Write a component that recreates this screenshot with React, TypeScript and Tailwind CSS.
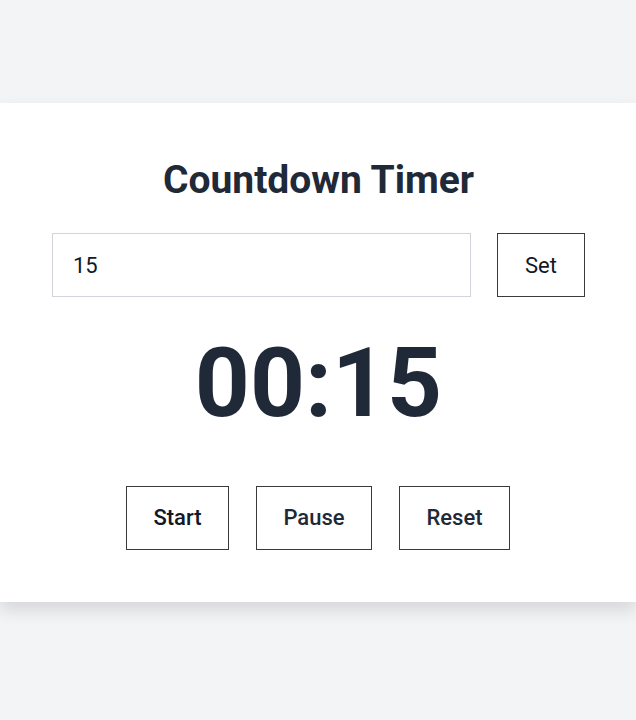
import { useEffect, useState } from "react";

function pad(n: number) {
  return n.toString().padStart(2, "0");
}

export default function App() {
  const [input, setInput] = useState("15");
  const [total, setTotal] = useState(15);
  const [left, setLeft] = useState(15);
  const [running, setRunning] = useState(false);

  useEffect(() => {
    if (!running) return;
    const id = setInterval(() => {
      setLeft((s) => {
        if (s <= 1) {
          setRunning(false);
          return 0;
        }
        return s - 1;
      });
    }, 1000);
    return () => clearInterval(id);
  }, [running]);

  const onSet = () => {
    const v = Math.max(0, parseInt(input, 10) || 0);
    setTotal(v);
    setLeft(v);
    setRunning(false);
  };

  return (
    <div
      className="min-h-screen bg-[#f3f4f6] pt-[103px]"
      style={{ fontFamily: "Roboto, 'Noto Sans', sans-serif" }}
    >
      <div className="bg-white pl-[52px] pr-[51px] pt-[55px] pb-[52px] shadow-[0_8px_16px_rgba(0,0,0,0.12)]">
        <h1 className="text-center text-[39px] leading-[44px] font-bold text-[#1f2937]">
          Countdown Timer
        </h1>

        <div className="mt-[31px] flex gap-[26px]">
          <input
            value={input}
            onChange={(e) => setInput(e.target.value)}
            className="h-16 flex-1 border border-[#d1d5db] px-5 text-[22px] text-[#111827] outline-none"
          />
          <button
            onClick={onSet}
            className="h-16 w-[88px] border border-[#3a3a3a] text-[22px] text-[#111827]"
          >
            Set
          </button>
        </div>

        <div className="mt-[38px] text-center text-[96px] leading-[96px] font-bold text-[#1f2937]">
          {pad(Math.floor(left / 60))}:{pad(left % 60)}
        </div>

        <div className="mt-[55px] flex justify-center gap-[27px] pr-[1px]">
          <button
            onClick={() => left > 0 && setRunning(true)}
            className="h-16 w-[103px] border border-[#3a3a3a] pb-[2px] text-[22px] font-medium text-[#111827]"
          >
            Start
          </button>
          <button
            onClick={() => setRunning(false)}
            className="h-16 w-[116px] border border-[#3a3a3a] pb-[2px] text-[22px] font-medium text-[#1f2937]"
          >
            Pause
          </button>
          <button
            onClick={() => {
              setRunning(false);
              setLeft(total);
            }}
            className="h-16 w-[111px] border border-[#3a3a3a] pb-[2px] text-[22px] font-medium text-[#1f2937]"
          >
            Reset
          </button>
        </div>
      </div>
    </div>
  );
}
